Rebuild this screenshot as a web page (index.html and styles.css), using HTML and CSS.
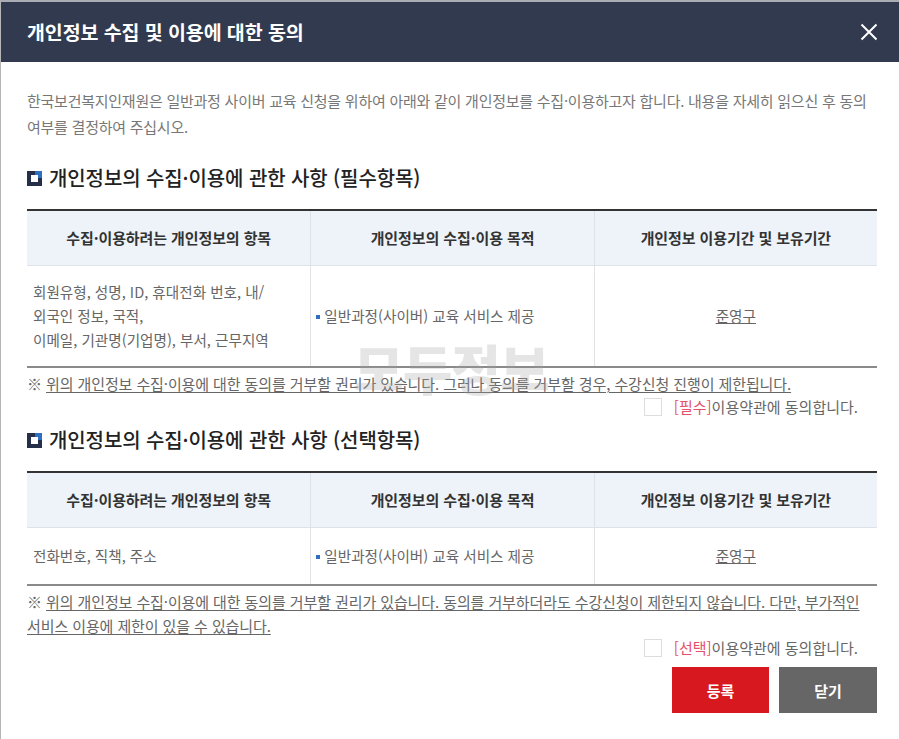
FILE: index.html
```html
<!DOCTYPE html>
<html lang="ko">
<head>
<meta charset="utf-8">
<title>개인정보 수집 및 이용에 대한 동의</title>
<link rel="stylesheet" href="styles.css">
</head>
<body>
<div class="dialog">
  <header class="dlg-head">
    <h1 class="dlg-title">개인정보 수집 및 이용에 대한 동의</h1>
    <button class="close" type="button" aria-label="닫기">
      <svg width="18" height="18" viewBox="0 0 18 18"><path d="M1.5 1.5 L16.5 16.5 M16.5 1.5 L1.5 16.5" stroke="#fff" stroke-width="2" fill="none"/></svg>
    </button>
  </header>
  <div class="dlg-body">
    <p class="intro">한국보건복지인재원은 일반과정 사이버 교육 신청을 위하여 아래와 같이 개인정보를 수집·이용하고자 합니다. 내용을 자세히 읽으신 후 동의 여부를 결정하여 주십시오.</p>

    <h2 class="sec-title"><span class="sq"></span>개인정보의 수집·이용에 관한 사항 (필수항목)</h2>
    <table class="agree">
      <thead>
        <tr><th>수집·이용하려는 개인정보의 항목</th><th>개인정보의 수집·이용 목적</th><th>개인정보 이용기간 및 보유기간</th></tr>
      </thead>
      <tbody>
        <tr class="tall">
          <td class="items">회원유형, 성명, ID, 휴대전화 번호, 내/<br>외국인 정보, 국적,<br>이메일, 기관명(기업명), 부서, 근무지역</td>
          <td class="purpose"><span class="dot"></span>일반과정(사이버) 교육 서비스 제공</td>
          <td class="period"><u>준영구</u></td>
        </tr>
      </tbody>
    </table>
    <p class="note">※ <u>위의 개인정보 수집·이용에 대한 동의를 거부할 권리가 있습니다. 그러나 동의를 거부할 경우, 수강신청 진행이 제한됩니다.</u></p>
    <div class="chk-row first"><label class="chk"><span class="box"></span><span class="tag">[필수]</span>이용약관에 동의합니다.</label></div>

    <h2 class="sec-title"><span class="sq"></span>개인정보의 수집·이용에 관한 사항 (선택항목)</h2>
    <table class="agree">
      <thead>
        <tr><th>수집·이용하려는 개인정보의 항목</th><th>개인정보의 수집·이용 목적</th><th>개인정보 이용기간 및 보유기간</th></tr>
      </thead>
      <tbody>
        <tr class="short">
          <td class="items">전화번호, 직책, 주소</td>
          <td class="purpose"><span class="dot"></span>일반과정(사이버) 교육 서비스 제공</td>
          <td class="period"><u>준영구</u></td>
        </tr>
      </tbody>
    </table>
    <p class="note">※ <u>위의 개인정보 수집·이용에 대한 동의를 거부할 권리가 있습니다. 동의를 거부하더라도 수강신청이 제한되지 않습니다. 다만, 부가적인 서비스 이용에 제한이 있을 수 있습니다.</u></p>
    <div class="chk-row second"><label class="chk"><span class="box"></span><span class="tag">[선택]</span>이용약관에 동의합니다.</label></div>

    <div class="btns">
      <button class="btn btn-red" type="button">등록</button>
      <button class="btn btn-gray" type="button">닫기</button>
    </div>
  </div>
  <div class="watermark">모두정보</div>
</div>
</body>
</html>
```

FILE: styles.css
```css
* { box-sizing: border-box; }
html, body { margin: 0; padding: 0; background: #fff; }
body {
  font-family: "Noto Sans CJK KR", "Noto Sans", sans-serif;
  color: #666;
  width: 899px;
  height: 739px;
  overflow: hidden;
  word-break: keep-all;
}
.dialog {
  position: relative;
  width: 899px;
  height: 739px;
  border-top: 2px solid #a9acb3;
  border-left: 1px solid #b5b5b5;
  background: #fff;
}
.dlg-head {
  height: 60px;
  background: #323a50;
  display: flex;
  align-items: center;
  justify-content: space-between;
  padding: 0 21px 0 26px;
}
.dlg-title {
  margin: 0;
  color: #fff;
  font-size: 19.5px;
  font-weight: 700;
  line-height: 26px;
  letter-spacing: -0.1px;
}
.close {
  border: 0;
  background: none;
  padding: 0;
  width: 18px;
  height: 18px;
  display: flex;
  cursor: pointer;
}
.dlg-body {
  padding: 26px 22px 0 26px;
}
.intro {
  margin: 0;
  font-size: 15px;
  line-height: 26px;
  color: #777;
  letter-spacing: -0.25px;
}
.sec-title {
  margin: 24px 0 0;
  display: flex;
  align-items: center;
  font-size: 20px;
  line-height: 28px;
  font-weight: 500;
  color: #222;
  letter-spacing: -0.1px;
}
.sec-title + .agree { margin-top: 17px; }
.chk-row + .sec-title { margin-top: 10px; }
.sq {
  position: relative;
  width: 15px;
  height: 15px;
  background: #262f4a;
  margin-right: 7px;
  flex: none;
}
.sq::before {
  content: "";
  position: absolute;
  right: 0;
  top: 0;
  width: 7px;
  height: 7px;
  background: #2f6fc0;
}
.sq::after {
  content: "";
  position: absolute;
  left: 4px;
  top: 4px;
  width: 7px;
  height: 7px;
  background: #fff;
}
.agree {
  width: 100%;
  border-collapse: separate;
  border-spacing: 0;
  table-layout: fixed;
  border-top: 2px solid #333;
  border-bottom: 2px solid #8a8a8a;
}
.agree th {
  background: #eef3fa;
  font-size: 15px;
  line-height: 24px;
  font-weight: 700;
  color: #333;
  border-bottom: 1px solid #dde2ea;
  border-left: 1px solid #dde2ea;
  padding: 15px 0;
  letter-spacing: -0.1px;
}
.agree td {
  border-left: 1px solid #e2e2e2;
  font-size: 14.6px;
  line-height: 24px;
  color: #666;
  padding: 14px 0 14px 6px;
  vertical-align: middle;
}
.agree th:first-child, .agree td:first-child { border-left: 0; }
.agree tr.short td { padding-top: 16px; padding-bottom: 16px; }
.agree td.purpose { padding-left: 5px; }
.agree td.period { text-align: center; padding-left: 0; }
.dot {
  display: inline-block;
  width: 4px;
  height: 4px;
  background: #2f6fc0;
  vertical-align: middle;
  margin: -2px 4px 0 0;
}
.note {
  margin: 0;
  padding-top: 4px;
  font-size: 15px;
  line-height: 24px;
  color: #666;
  letter-spacing: -0.1px;
}
.note u { text-underline-offset: 2px; }
.chk-row {
  display: flex;
  justify-content: flex-end;
  padding-right: 19px;
  height: 18px;
}
.chk-row.first { margin-top: 2px; }
.chk-row.second { margin-top: 1px; }
.chk {
  display: flex;
  align-items: center;
  font-size: 15px;
  line-height: 18px;
  color: #666;
}
.box {
  width: 18px;
  height: 18px;
  border: 1px solid #ddd;
  background: #fff;
  margin-right: 12px;
}
.tag { color: #e5506a; }
.btns {
  display: flex;
  justify-content: flex-end;
  gap: 10px;
  margin-top: 10px;
}
.btn {
  height: 46px;
  border: 0;
  color: #fff;
  font-family: inherit;
  font-size: 15px;
  font-weight: 700;
  padding: 0;
  cursor: pointer;
}
.btn-red { width: 97px; background: #d7181f; }
.btn-gray { width: 98px; background: #666; }
.watermark {
  position: absolute;
  left: 353px;
  top: 336px;
  font-size: 54px;
  line-height: 60px;
  font-weight: 900;
  color: rgba(160, 160, 160, 0.28);
  letter-spacing: -1px;
  pointer-events: none;
}
```
